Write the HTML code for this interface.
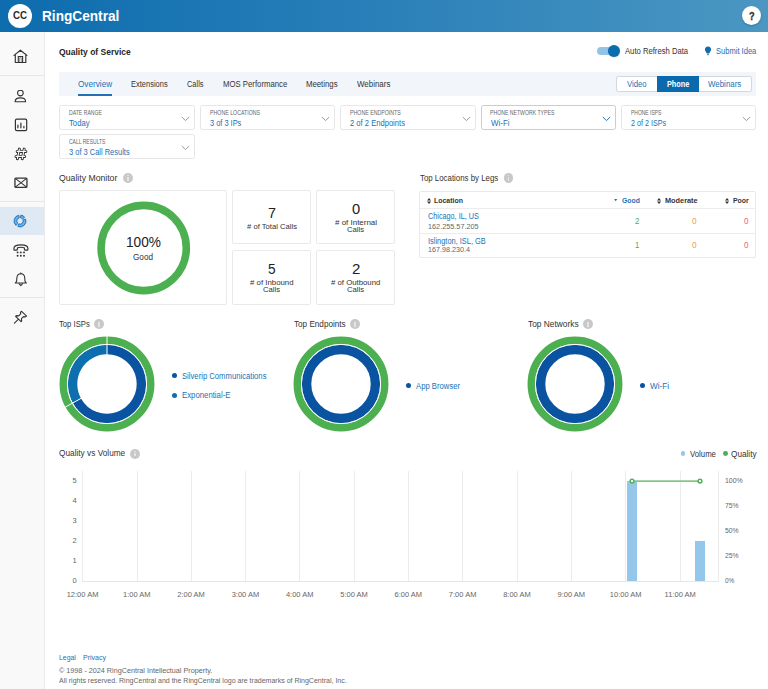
<!DOCTYPE html>
<html><head><meta charset="utf-8"><style>
html,body{margin:0;padding:0;}
body{width:768px;height:689px;position:relative;overflow:hidden;background:#fff;font-family:"Liberation Sans", sans-serif;}
.t{position:absolute;white-space:nowrap;transform-origin:0 0;}
.r{position:absolute;}
</style></head><body>
<div class="r" style="left:0px;top:0px;width:768px;height:32px;background:linear-gradient(90deg,#0d6cad 0%,#2a80b9 50%,#4b97c2 100%);"></div>
<div class="r" style="left:8px;top:4px;width:24px;height:24px;background:#fff;border-radius:50%;"></div>
<div class="t" id="t1" style="left:13.40px;top:11.00px;font-size:10px;line-height:10px;color:#2b2b2b;font-weight:bold;transform:scaleX(0.9714);"><span>CC</span></div>
<div class="t" id="t2" style="left:42.30px;top:9.00px;font-size:14px;line-height:14px;color:#fff;font-weight:bold;transform:scaleX(0.9747);"><span>RingCentral</span></div>
<div class="r" style="left:741.9px;top:5.9px;width:19.5px;height:19.5px;background:#fff;border-radius:50%;box-shadow:0 1px 2px rgba(0,0,0,.22);"></div>
<div class="t" id="t3" style="left:748.90px;top:11.00px;font-size:11.5px;line-height:11.5px;color:#333;font-weight:bold;transform:scaleX(0.8000);-webkit-text-stroke:0.35px #333;"><span>?</span></div>
<div class="r" style="left:0px;top:32px;width:45px;height:657px;background:#f9f9f9;border-right:1px solid #ebebeb;box-sizing:border-box;"></div>
<div class="r" style="left:0px;top:75px;width:44px;height:1px;background:#e6e6e6;"></div>
<div class="r" style="left:0px;top:201px;width:44px;height:1px;background:#e6e6e6;"></div>
<div class="r" style="left:0px;top:297px;width:44px;height:1px;background:#e6e6e6;"></div>
<div class="r" style="left:0px;top:207px;width:44px;height:28px;background:#dfe9f3;"></div>
<svg class="r" style="left:13px;top:49px" width="15" height="15" viewBox="0 0 15 15"><path d="M1 6.4 L7.4 1.2 L13.9 6.4 M2.3 5.4 V13.5 H12.8 V5.4" fill="none" stroke="#333" stroke-width="1.15" stroke-linejoin="round" stroke-linecap="round"/><path d="M5.3 13.5 V7.5 H9.6 V13.5" fill="none" stroke="#333" stroke-width="1.1"/><path d="M6.6 13.5 V8.7 H8.3 V13.5" fill="none" stroke="#333" stroke-width="0.45"/></svg>
<svg class="r" style="left:14px;top:89.5px" width="13" height="13" viewBox="0 0 13 13"><circle cx="6.4" cy="3.0" r="2.85" fill="none" stroke="#333" stroke-width="1.1"/><path d="M1.1 11.8 C1.1 9 2.8 7.9 6.4 7.9 C10 7.9 11.6 9 11.6 11.8 Z" fill="none" stroke="#333" stroke-width="1.1" stroke-linejoin="round"/></svg>
<svg class="r" style="left:13.5px;top:117.5px" width="14" height="14" viewBox="0 0 14 14"><rect x="1.4" y="1.2" width="11.3" height="11.4" rx="1.4" fill="none" stroke="#333" stroke-width="1.2"/><path d="M3.9 7.1 V9.8 M6.9 5.2 V9.8 M9.9 8.4 V9.8" stroke="#333" stroke-width="1.2" stroke-linecap="round"/></svg>
<svg class="r" style="left:13.5px;top:146.5px" width="14" height="14" viewBox="0 0 14 14"><path d="M5.4 2.1 L3.4 11.7 M10.2 2.1 L8.3 11.7 M3.2 4.4 H11.8 M2.0 9.4 H10.6" fill="none" stroke="#333" stroke-width="3.0" stroke-linecap="round"/><path d="M5.4 2.1 L3.4 11.7 M10.2 2.1 L8.3 11.7 M3.2 4.4 H11.8 M2.0 9.4 H10.6" fill="none" stroke="#f8f8f8" stroke-width="1.1" stroke-linecap="round"/></svg>
<svg class="r" style="left:13.5px;top:176.5px" width="14" height="12" viewBox="0 0 14 12"><rect x="0.95" y="1.05" width="12" height="9.3" rx="1.1" fill="none" stroke="#333" stroke-width="1.3"/><path d="M0.95 1.05 L12.95 10.35 M12.95 1.05 L0.95 10.35" fill="none" stroke="#333" stroke-width="1.05"/></svg>
<svg class="r" style="left:13.4px;top:213.9px" width="14" height="14" viewBox="0 0 14 14"><path d="M7.93 1.12 A5.95 5.95 0 0 1 11.69 3.34 L9.52 5.03 A3.2 3.2 0 0 0 7.50 3.84 Z" fill="#74ade0" stroke="#1f78c0" stroke-width="1.0" stroke-linejoin="round"/><path d="M12.66 5.16 A5.95 5.95 0 0 1 4.96 12.59 L5.91 10.01 A3.2 3.2 0 0 0 10.04 6.01 Z" fill="#74ade0" stroke="#1f78c0" stroke-width="1.0" stroke-linejoin="round"/><path d="M3.02 11.42 A5.95 5.95 0 0 1 5.76 1.18 L6.33 3.87 A3.2 3.2 0 0 0 4.86 9.38 Z" fill="#74ade0" stroke="#1f78c0" stroke-width="1.0" stroke-linejoin="round"/></svg>
<svg class="r" style="left:12.5px;top:242.7px" width="16" height="14" viewBox="0 0 16 14"><path d="M4.3 6.6 L4.5 4.8 C6.5 4.1 9.3 4.1 11.3 4.8 L11.5 6.6 Q11.6 7.1 12.1 7.1 L14.3 7.1 Q14.9 7.1 14.9 6.5 L14.9 5.5 C14.9 3 11.5 1.9 7.9 1.9 C4.3 1.9 0.9 3 0.9 5.5 L0.9 6.5 Q0.9 7.1 1.5 7.1 L3.7 7.1 Q4.2 7.1 4.3 6.6 Z" fill="none" stroke="#333" stroke-width="1.15" stroke-linejoin="round"/><circle cx="4.6" cy="9.4" r="0.95" fill="#333"/><circle cx="4.6" cy="12.8" r="0.95" fill="#333"/><circle cx="7.8" cy="9.4" r="0.95" fill="#333"/><circle cx="7.8" cy="12.8" r="0.95" fill="#333"/><circle cx="11.0" cy="9.4" r="0.95" fill="#333"/><circle cx="11.0" cy="12.8" r="0.95" fill="#333"/></svg>
<svg class="r" style="left:13.5px;top:271.5px" width="14" height="15" viewBox="0 0 14 15"><path d="M6.8 1.8 C4.3 1.8 2.9 3.8 2.8 6.5 L2.6 9.3 L1.25 11 L12.35 11 L11 9.3 L10.8 6.5 C10.7 3.8 9.3 1.8 6.8 1.8 Z" fill="none" stroke="#333" stroke-width="1.1" stroke-linejoin="round"/><path d="M4.8 11.4 L6.8 13.7 L8.8 11.4" fill="none" stroke="#333" stroke-width="1.1" stroke-linejoin="round"/><circle cx="6.8" cy="1.4" r="0.8" fill="#333"/></svg>
<svg class="r" style="left:13px;top:310px" width="15" height="15" viewBox="0 0 15 15"><path d="M8.6 1.3 L13.6 6.1 L12.4 6.9 L10.5 6.6 L8.4 8.6 L8.7 10.9 L8.1 11.7 L2.6 6.3 L3.5 5.6 L5.7 5.9 L7.7 3.9 L7.5 2.1 Z M5.3 9.3 L1.4 13.1" fill="none" stroke="#333" stroke-width="1.1" stroke-linejoin="round" stroke-linecap="round"/></svg>
<div class="t" id="t4" style="left:59.00px;top:47.00px;font-size:9.5px;line-height:9.5px;color:#262626;font-weight:bold;transform:scaleX(0.8938);"><span>Quality of Service</span></div>
<div class="r" style="left:597.2px;top:47px;width:21px;height:7.8px;background:#93c3e6;border-radius:3.9px;"></div>
<div class="r" style="left:607.55px;top:45.05px;width:12px;height:12px;background:#0b6dae;border-radius:50%;box-shadow:0 0.5px 1px rgba(0,0,0,.2);"></div>
<div class="t" id="t5" style="left:624.80px;top:47.00px;font-size:8.5px;line-height:8.5px;color:#333;font-weight:normal;transform:scaleX(0.9029);"><span>Auto Refresh Data</span></div>
<svg class="r" style="left:704.2px;top:46.2px" width="8" height="10" viewBox="0 0 8 10"><path d="M4 0.4 C2 0.4 0.9 1.9 0.9 3.5 C0.9 5.1 2.3 5.9 2.7 7.4 H5.3 C5.7 5.9 7.1 5.1 7.1 3.5 C7.1 1.9 6 0.4 4 0.4 Z" fill="#0f6dae"/><path d="M2.8 7.9 H5.2 L4.9 9.3 H3.1 Z" fill="#5b9fd0"/></svg>
<div class="t" id="t6" style="left:716.40px;top:47.00px;font-size:8.5px;line-height:8.5px;color:#1a6fae;font-weight:normal;transform:scaleX(0.8889);"><span>Submit Idea</span></div>
<div class="r" style="left:59px;top:72px;width:697px;height:24px;background:#f2f6fa;"></div>
<div class="t" id="t7" style="left:78.00px;top:80.00px;font-size:8.5px;line-height:8.5px;color:#2072b5;font-weight:normal;transform:scaleX(0.9629);"><span>Overview</span></div>
<div class="t" id="t8" style="left:131.00px;top:80.00px;font-size:8.5px;line-height:8.5px;color:#333;font-weight:normal;transform:scaleX(0.8810);"><span>Extensions</span></div>
<div class="t" id="t9" style="left:187.20px;top:80.00px;font-size:8.5px;line-height:8.5px;color:#333;font-weight:normal;transform:scaleX(0.8737);"><span>Calls</span></div>
<div class="t" id="t10" style="left:223.00px;top:80.00px;font-size:8.5px;line-height:8.5px;color:#333;font-weight:normal;transform:scaleX(0.9129);"><span>MOS Performance</span></div>
<div class="t" id="t11" style="left:306.00px;top:80.00px;font-size:8.5px;line-height:8.5px;color:#333;font-weight:normal;transform:scaleX(0.9143);"><span>Meetings</span></div>
<div class="t" id="t12" style="left:357.00px;top:80.00px;font-size:8.5px;line-height:8.5px;color:#333;font-weight:normal;transform:scaleX(0.9333);"><span>Webinars</span></div>
<div class="r" style="left:78px;top:94.4px;width:34px;height:1.7px;background:#2072b5;"></div>
<div class="r" style="left:616px;top:76px;width:136px;height:16px;background:#fff;border:1px solid #d0d7de;border-radius:2px;box-sizing:border-box;"></div>
<div class="r" style="left:657px;top:76px;width:42px;height:16px;background:#0b6aad;"></div>
<div class="t" id="t13" style="left:627.00px;top:80.00px;font-size:8.5px;line-height:8.5px;color:#2072b5;font-weight:normal;transform:scaleX(0.9091);"><span>Video</span></div>
<div class="t" id="t14" style="left:666.70px;top:80.00px;font-size:8.5px;line-height:8.5px;color:#fff;font-weight:bold;transform:scaleX(0.8577);"><span>Phone</span></div>
<div class="t" id="t15" style="left:708.00px;top:80.00px;font-size:8.5px;line-height:8.5px;color:#2072b5;font-weight:normal;transform:scaleX(0.9306);"><span>Webinars</span></div>
<div class="r" style="left:59.3px;top:105.4px;width:135.5px;height:24.4px;background:#fff;border:1px solid #e6e6e6;border-radius:2.5px;box-sizing:border-box;"></div>
<div class="t" id="t16" style="left:69.10px;top:110.00px;font-size:6.5px;line-height:6.5px;color:#666;font-weight:normal;transform:scaleX(0.7881);"><span>DATE RANGE</span></div>
<div class="t" id="t17" style="left:69.30px;top:119.00px;font-size:9px;line-height:9px;color:#2072b5;font-weight:normal;transform:scaleX(0.8583);"><span>Today</span></div>
<svg class="r" style="left:180.8px;top:115.5px" width="9" height="6" viewBox="0 0 9 6"><path d="M0.8 1 L4.5 4.6 L8.2 1" fill="none" stroke="#999" stroke-width="1"/></svg>
<div class="r" style="left:199.7px;top:105.4px;width:135.5px;height:24.4px;background:#fff;border:1px solid #e6e6e6;border-radius:2.5px;box-sizing:border-box;"></div>
<div class="t" id="t18" style="left:209.50px;top:110.00px;font-size:6.5px;line-height:6.5px;color:#666;font-weight:normal;transform:scaleX(0.8081);"><span>PHONE LOCATIONS</span></div>
<div class="t" id="t19" style="left:209.70px;top:119.00px;font-size:9px;line-height:9px;color:#2072b5;font-weight:normal;transform:scaleX(0.8237);"><span>3 of 3 IPs</span></div>
<svg class="r" style="left:321.2px;top:115.5px" width="9" height="6" viewBox="0 0 9 6"><path d="M0.8 1 L4.5 4.6 L8.2 1" fill="none" stroke="#999" stroke-width="1"/></svg>
<div class="r" style="left:340.1px;top:105.4px;width:135.5px;height:24.4px;background:#fff;border:1px solid #e6e6e6;border-radius:2.5px;box-sizing:border-box;"></div>
<div class="t" id="t20" style="left:349.90px;top:110.00px;font-size:6.5px;line-height:6.5px;color:#666;font-weight:normal;transform:scaleX(0.8079);"><span>PHONE ENDPOINTS</span></div>
<div class="t" id="t21" style="left:350.10px;top:119.00px;font-size:9px;line-height:9px;color:#2072b5;font-weight:normal;transform:scaleX(0.8446);"><span>2 of 2 Endpoints</span></div>
<svg class="r" style="left:461.6px;top:115.5px" width="9" height="6" viewBox="0 0 9 6"><path d="M0.8 1 L4.5 4.6 L8.2 1" fill="none" stroke="#999" stroke-width="1"/></svg>
<div class="r" style="left:480.5px;top:105.4px;width:135.5px;height:24.4px;background:#fff;border:1px solid #b3d3ec;border-radius:2.5px;box-sizing:border-box;"></div>
<div class="t" id="t22" style="left:490.30px;top:110.00px;font-size:6.5px;line-height:6.5px;color:#666;font-weight:normal;transform:scaleX(0.7926);"><span>PHONE NETWORK TYPES</span></div>
<div class="t" id="t23" style="left:490.50px;top:119.00px;font-size:9px;line-height:9px;color:#2072b5;font-weight:normal;transform:scaleX(0.8810);"><span>Wi-Fi</span></div>
<svg class="r" style="left:602.0px;top:115.5px" width="9" height="6" viewBox="0 0 9 6"><path d="M0.8 1 L4.5 4.6 L8.2 1" fill="none" stroke="#2072b5" stroke-width="1"/></svg>
<div class="r" style="left:620.9px;top:105.4px;width:135.5px;height:24.4px;background:#fff;border:1px solid #e6e6e6;border-radius:2.5px;box-sizing:border-box;"></div>
<div class="t" id="t24" style="left:630.70px;top:110.00px;font-size:6.5px;line-height:6.5px;color:#666;font-weight:normal;transform:scaleX(0.7650);"><span>PHONE ISPS</span></div>
<div class="t" id="t25" style="left:630.90px;top:119.00px;font-size:9px;line-height:9px;color:#2072b5;font-weight:normal;transform:scaleX(0.7955);"><span>2 of 2 ISPs</span></div>
<svg class="r" style="left:742.4px;top:115.5px" width="9" height="6" viewBox="0 0 9 6"><path d="M0.8 1 L4.5 4.6 L8.2 1" fill="none" stroke="#999" stroke-width="1"/></svg>
<div class="r" style="left:59.3px;top:134.2px;width:135.5px;height:24.4px;background:#fff;border:1px solid #e6e6e6;border-radius:2.5px;box-sizing:border-box;"></div>
<div class="t" id="t26" style="left:69.10px;top:139.00px;font-size:6.5px;line-height:6.5px;color:#666;font-weight:normal;transform:scaleX(0.7702);"><span>CALL RESULTS</span></div>
<div class="t" id="t27" style="left:69.30px;top:148.00px;font-size:9px;line-height:9px;color:#2072b5;font-weight:normal;transform:scaleX(0.8301);"><span>3 of 3 Call Results</span></div>
<svg class="r" style="left:180.8px;top:144.5px" width="9" height="6" viewBox="0 0 9 6"><path d="M0.8 1 L4.5 4.6 L8.2 1" fill="none" stroke="#999" stroke-width="1"/></svg>
<div class="t" id="t28" style="left:59.00px;top:174.00px;font-size:9px;line-height:9px;color:#333;font-weight:normal;transform:scaleX(0.9639);"><span>Quality Monitor</span></div>
<div class="r" style="left:123.0px;top:173.0px;width:9.8px;height:9.8px;background:#c8c8c8;border-radius:50%;"></div>
<div class="r" style="left:127.05000000000001px;top:177.0px;width:1.7px;height:3.5px;background:#e4e4e4;"></div>
<div class="r" style="left:127.05000000000001px;top:175.1px;width:1.7px;height:1.2px;background:#e4e4e4;"></div>
<div class="t" id="t29" style="left:420.00px;top:174.00px;font-size:9px;line-height:9px;color:#333;font-weight:normal;transform:scaleX(0.8733);"><span>Top Locations by Legs</span></div>
<div class="r" style="left:503.5px;top:173.0px;width:9.8px;height:9.8px;background:#c8c8c8;border-radius:50%;"></div>
<div class="r" style="left:507.54999999999995px;top:177.0px;width:1.7px;height:3.5px;background:#e4e4e4;"></div>
<div class="r" style="left:507.54999999999995px;top:175.1px;width:1.7px;height:1.2px;background:#e4e4e4;"></div>
<div class="t" id="t30" style="left:58.70px;top:320.00px;font-size:9px;line-height:9px;color:#333;font-weight:normal;transform:scaleX(0.8528);"><span>Top ISPs</span></div>
<div class="r" style="left:94.19999999999999px;top:319.40000000000003px;width:9.8px;height:9.8px;background:#c8c8c8;border-radius:50%;"></div>
<div class="r" style="left:98.25px;top:323.40000000000003px;width:1.7px;height:3.5px;background:#e4e4e4;"></div>
<div class="r" style="left:98.25px;top:321.5px;width:1.7px;height:1.2px;background:#e4e4e4;"></div>
<div class="t" id="t31" style="left:293.60px;top:320.00px;font-size:9px;line-height:9px;color:#333;font-weight:normal;transform:scaleX(0.9053);"><span>Top Endpoints</span></div>
<div class="r" style="left:350.3px;top:319.40000000000003px;width:9.8px;height:9.8px;background:#c8c8c8;border-radius:50%;"></div>
<div class="r" style="left:354.34999999999997px;top:323.40000000000003px;width:1.7px;height:3.5px;background:#e4e4e4;"></div>
<div class="r" style="left:354.34999999999997px;top:321.5px;width:1.7px;height:1.2px;background:#e4e4e4;"></div>
<div class="t" id="t32" style="left:527.70px;top:320.00px;font-size:9px;line-height:9px;color:#333;font-weight:normal;transform:scaleX(0.9273);"><span>Top Networks</span></div>
<div class="r" style="left:583.4px;top:319.40000000000003px;width:9.8px;height:9.8px;background:#c8c8c8;border-radius:50%;"></div>
<div class="r" style="left:587.4499999999999px;top:323.40000000000003px;width:1.7px;height:3.5px;background:#e4e4e4;"></div>
<div class="r" style="left:587.4499999999999px;top:321.5px;width:1.7px;height:1.2px;background:#e4e4e4;"></div>
<div class="t" id="t33" style="left:59.00px;top:449.00px;font-size:9px;line-height:9px;color:#333;font-weight:normal;transform:scaleX(0.9194);"><span>Quality vs Volume</span></div>
<div class="r" style="left:130.29999999999998px;top:448.8px;width:9.8px;height:9.8px;background:#c8c8c8;border-radius:50%;"></div>
<div class="r" style="left:134.35px;top:452.8px;width:1.7px;height:3.5px;background:#e4e4e4;"></div>
<div class="r" style="left:134.35px;top:450.9px;width:1.7px;height:1.2px;background:#e4e4e4;"></div>
<div class="r" style="left:59px;top:190px;width:168px;height:114.5px;background:#fff;border:1px solid #e9e9e9;border-radius:2px;box-sizing:border-box;"></div>
<svg class="r" style="left:96px;top:201px" width="96" height="96" viewBox="0 0 96 96"><circle cx="47.7" cy="47" r="42.6" fill="none" stroke="#4caf50" stroke-width="7.6"/></svg>
<div class="t" id="t34" style="left:126.00px;top:235.00px;font-size:14px;line-height:14px;color:#222;font-weight:normal;transform:scaleX(0.9778);"><span>100%</span></div>
<div class="t" id="t35" style="left:133.40px;top:253.00px;font-size:9px;line-height:9px;color:#333;font-weight:normal;transform:scaleX(0.9091);"><span>Good</span></div>
<div class="r" style="left:232px;top:190px;width:79px;height:54.4px;background:#fff;border:1px solid #e9e9e9;border-radius:2px;box-sizing:border-box;"></div>
<div class="t" id="t36" style="left:267.70px;top:206.00px;font-size:14px;line-height:14px;color:#222;font-weight:normal;transform:scaleX(1.0250);"><span>7</span></div>
<div class="t" id="t37" style="left:246.65px;top:223.00px;font-size:8px;line-height:8px;color:#333;font-weight:normal;transform:scaleX(0.9558);"><span># of Total Calls</span></div>
<div class="r" style="left:316.4px;top:190px;width:79px;height:54.4px;background:#fff;border:1px solid #e9e9e9;border-radius:2px;box-sizing:border-box;"></div>
<div class="t" id="t38" style="left:352.00px;top:202.00px;font-size:14px;line-height:14px;color:#222;font-weight:normal;transform:scaleX(1.0500);"><span>0</span></div>
<div class="t" id="t39" style="left:335.00px;top:219.00px;font-size:8px;line-height:8px;color:#333;font-weight:normal;transform:scaleX(0.9952);"><span># of Internal</span></div>
<div class="t" id="t40" style="left:347.25px;top:226.00px;font-size:8px;line-height:8px;color:#333;font-weight:normal;transform:scaleX(0.9611);"><span>Calls</span></div>
<div class="r" style="left:232px;top:250.3px;width:79px;height:54.4px;background:#fff;border:1px solid #e9e9e9;border-radius:2px;box-sizing:border-box;"></div>
<div class="t" id="t41" style="left:267.90px;top:262.00px;font-size:14px;line-height:14px;color:#222;font-weight:normal;transform:scaleX(0.9750);"><span>5</span></div>
<div class="t" id="t42" style="left:249.95px;top:279.00px;font-size:8px;line-height:8px;color:#333;font-weight:normal;transform:scaleX(0.9795);"><span># of Inbound</span></div>
<div class="t" id="t43" style="left:262.85px;top:286.00px;font-size:8px;line-height:8px;color:#333;font-weight:normal;transform:scaleX(0.9611);"><span>Calls</span></div>
<div class="r" style="left:316.4px;top:250.3px;width:79px;height:54.4px;background:#fff;border:1px solid #e9e9e9;border-radius:2px;box-sizing:border-box;"></div>
<div class="t" id="t44" style="left:351.90px;top:262.00px;font-size:14px;line-height:14px;color:#222;font-weight:normal;transform:scaleX(1.0750);"><span>2</span></div>
<div class="t" id="t45" style="left:331.10px;top:279.00px;font-size:8px;line-height:8px;color:#333;font-weight:normal;transform:scaleX(0.9725);"><span># of Outbound</span></div>
<div class="t" id="t46" style="left:347.25px;top:286.00px;font-size:8px;line-height:8px;color:#333;font-weight:normal;transform:scaleX(0.9611);"><span>Calls</span></div>
<div class="r" style="left:419.4px;top:190.6px;width:337px;height:67px;background:#fff;border:1px solid #e9e9e9;border-radius:2px;box-sizing:border-box;"></div>
<div class="r" style="left:420px;top:208px;width:336px;height:1px;background:#ececec;"></div>
<div class="r" style="left:420px;top:233px;width:336px;height:1px;background:#ececec;"></div>
<svg class="r" style="left:427.1px;top:197.6px" width="5" height="7" viewBox="0 0 5 7"><path d="M0 2.5 L2.05 0.1 L4.1 2.5 Z M0 3.6 L2.05 6.0 L4.1 3.6 Z" fill="#333"/></svg>
<div class="t" id="t47" style="left:433.90px;top:197.00px;font-size:7px;line-height:7px;color:#333;font-weight:bold;transform:scaleX(0.9897);"><span>Location</span></div>
<svg class="r" style="left:614.4px;top:198.7px" width="4" height="3" viewBox="0 0 4 3"><path d="M0.1 0.1 L3.3 0.1 L1.7 2.2 Z" fill="#2072b5"/></svg>
<div class="t" id="t48" style="left:621.70px;top:197.00px;font-size:7px;line-height:7px;color:#2072b5;font-weight:bold;transform:scaleX(0.9778);"><span>Good</span></div>
<svg class="r" style="left:657.3px;top:197.6px" width="5" height="7" viewBox="0 0 5 7"><path d="M0 2.5 L2.05 0.1 L4.1 2.5 Z M0 3.6 L2.05 6.0 L4.1 3.6 Z" fill="#333"/></svg>
<div class="t" id="t49" style="left:664.80px;top:197.00px;font-size:7px;line-height:7px;color:#333;font-weight:bold;transform:scaleX(1.0484);"><span>Moderate</span></div>
<svg class="r" style="left:725.4px;top:197.6px" width="5" height="7" viewBox="0 0 5 7"><path d="M0 2.5 L2.05 0.1 L4.1 2.5 Z M0 3.6 L2.05 6.0 L4.1 3.6 Z" fill="#333"/></svg>
<div class="t" id="t50" style="left:732.50px;top:197.00px;font-size:7px;line-height:7px;color:#333;font-weight:bold;transform:scaleX(0.9875);"><span>Poor</span></div>
<div class="t" id="t51" style="left:427.60px;top:212.00px;font-size:9px;line-height:9px;color:#2072b5;font-weight:normal;transform:scaleX(0.8063);"><span>Chicago, IL, US</span></div>
<div class="t" id="t52" style="left:427.60px;top:223.00px;font-size:7.5px;line-height:7.5px;color:#666;font-weight:normal;transform:scaleX(0.9712);"><span>162.255.57.205</span></div>
<div class="t" id="t53" style="left:427.60px;top:237.00px;font-size:9px;line-height:9px;color:#2072b5;font-weight:normal;transform:scaleX(0.8257);"><span>Islington, ISL, GB</span></div>
<div class="t" id="t54" style="left:427.60px;top:246.00px;font-size:7.5px;line-height:7.5px;color:#666;font-weight:normal;transform:scaleX(0.9591);"><span>167.98.230.4</span></div>
<div class="t" id="t55" style="left:635.10px;top:217.00px;font-size:9px;line-height:9px;color:#4caf50;font-weight:normal;transform:scaleX(0.8600);"><span>2</span></div>
<div class="t" id="t56" style="left:692.40px;top:217.00px;font-size:9px;line-height:9px;color:#ee9a4d;font-weight:normal;transform:scaleX(0.9200);"><span>0</span></div>
<div class="t" id="t57" style="left:743.70px;top:217.00px;font-size:9px;line-height:9px;color:#f0646a;font-weight:normal;transform:scaleX(0.9200);"><span>0</span></div>
<div class="t" id="t58" style="left:635.10px;top:241.00px;font-size:9px;line-height:9px;color:#4caf50;font-weight:normal;transform:scaleX(0.8600);"><span>1</span></div>
<div class="t" id="t59" style="left:692.40px;top:241.00px;font-size:9px;line-height:9px;color:#ee9a4d;font-weight:normal;transform:scaleX(0.9200);"><span>0</span></div>
<div class="t" id="t60" style="left:743.70px;top:241.00px;font-size:9px;line-height:9px;color:#f0646a;font-weight:normal;transform:scaleX(0.9200);"><span>0</span></div>
<svg class="r" style="left:57.06999999999999px;top:334.2px" width="100" height="100" viewBox="0 0 100 100"><circle cx="50" cy="50" r="43.725" fill="none" stroke="#4caf50" stroke-width="7.450000000000003"/><path d="M50.000 15.550 A34.45 34.45 0 1 1 19.869 66.702" fill="none" stroke="#0a53a1" stroke-width="9.500000000000004"/><path d="M19.869 66.702 A34.45 34.45 0 0 1 49.999 15.550" fill="none" stroke="#0d6fad" stroke-width="9.500000000000004"/><circle cx="50" cy="50" r="39.6" fill="none" stroke="#fff" stroke-width="0.9"/><line x1="50.000" y1="22.000" x2="50.000" y2="2.000" stroke="#fff" stroke-width="1"/><line x1="25.511" y1="63.575" x2="8.018" y2="73.271" stroke="#fff" stroke-width="1"/></svg>
<svg class="r" style="left:291.3px;top:334.3px" width="100" height="100" viewBox="0 0 100 100"><circle cx="50" cy="50" r="43.725" fill="none" stroke="#4caf50" stroke-width="7.450000000000003"/><circle cx="50" cy="50" r="34.45" fill="none" stroke="#0a53a1" stroke-width="9.500000000000004"/><circle cx="50" cy="50" r="39.6" fill="none" stroke="#fff" stroke-width="0.9"/></svg>
<svg class="r" style="left:525.2px;top:334.3px" width="100" height="100" viewBox="0 0 100 100"><circle cx="50" cy="50" r="43.725" fill="none" stroke="#4caf50" stroke-width="7.450000000000003"/><circle cx="50" cy="50" r="34.45" fill="none" stroke="#0a53a1" stroke-width="9.500000000000004"/><circle cx="50" cy="50" r="39.6" fill="none" stroke="#fff" stroke-width="0.9"/></svg>
<div class="r" style="left:171.75px;top:373.29999999999995px;width:5.2px;height:5.2px;background:#0a53a1;border-radius:50%;"></div>
<div class="t" id="t61" style="left:181.60px;top:372.00px;font-size:8.5px;line-height:8.5px;color:#2072b5;font-weight:normal;transform:scaleX(0.9032);"><span>Silverip Communications</span></div>
<div class="r" style="left:171.75px;top:392.59999999999997px;width:5.2px;height:5.2px;background:#0d6fad;border-radius:50%;"></div>
<div class="t" id="t62" style="left:181.60px;top:391.00px;font-size:8.5px;line-height:8.5px;color:#2072b5;font-weight:normal;transform:scaleX(0.9151);"><span>Exponential-E</span></div>
<div class="r" style="left:406.04999999999995px;top:383.15px;width:5.2px;height:5.2px;background:#0a53a1;border-radius:50%;"></div>
<div class="t" id="t63" style="left:416.00px;top:382.00px;font-size:8.5px;line-height:8.5px;color:#2072b5;font-weight:normal;transform:scaleX(0.9061);"><span>App Browser</span></div>
<div class="r" style="left:639.9px;top:383.09999999999997px;width:5.2px;height:5.2px;background:#0a53a1;border-radius:50%;"></div>
<div class="t" id="t64" style="left:649.80px;top:382.00px;font-size:8.5px;line-height:8.5px;color:#2072b5;font-weight:normal;transform:scaleX(0.9600);"><span>Wi-Fi</span></div>
<div class="r" style="left:680.7px;top:451.40000000000003px;width:4.8px;height:4.8px;background:#95c7ea;border-radius:50%;"></div>
<div class="t" id="t65" style="left:689.70px;top:450.00px;font-size:8.5px;line-height:8.5px;color:#333;font-weight:normal;transform:scaleX(0.9143);"><span>Volume</span></div>
<div class="r" style="left:723.0px;top:451.40000000000003px;width:4.8px;height:4.8px;background:#4caf50;border-radius:50%;"></div>
<div class="t" id="t66" style="left:731.30px;top:450.00px;font-size:8.5px;line-height:8.5px;color:#333;font-weight:normal;transform:scaleX(0.9654);"><span>Quality</span></div>
<div class="r" style="left:82.2px;top:471px;width:1px;height:110.5px;background:#ececec;"></div>
<div class="r" style="left:136.5px;top:471px;width:1px;height:110.5px;background:#ececec;"></div>
<div class="r" style="left:190.8px;top:471px;width:1px;height:110.5px;background:#ececec;"></div>
<div class="r" style="left:245.1px;top:471px;width:1px;height:110.5px;background:#ececec;"></div>
<div class="r" style="left:299.4px;top:471px;width:1px;height:110.5px;background:#ececec;"></div>
<div class="r" style="left:353.8px;top:471px;width:1px;height:110.5px;background:#ececec;"></div>
<div class="r" style="left:408.1px;top:471px;width:1px;height:110.5px;background:#ececec;"></div>
<div class="r" style="left:462.4px;top:471px;width:1px;height:110.5px;background:#ececec;"></div>
<div class="r" style="left:516.7px;top:471px;width:1px;height:110.5px;background:#ececec;"></div>
<div class="r" style="left:571.0px;top:471px;width:1px;height:110.5px;background:#ececec;"></div>
<div class="r" style="left:625.3px;top:471px;width:1px;height:110.5px;background:#ececec;"></div>
<div class="r" style="left:679.6px;top:471px;width:1px;height:110.5px;background:#ececec;"></div>
<div class="r" style="left:718.3px;top:471px;width:1px;height:110.5px;background:#ececec;"></div>
<div class="r" style="left:82.2px;top:581px;width:637px;height:1px;background:#e6e6e6;"></div>
<div class="t" id="t67" style="left:72.40px;top:577.00px;font-size:7.5px;line-height:7.5px;color:#666;font-weight:normal;"><span>0</span></div>
<div class="t" id="t68" style="left:72.40px;top:557.00px;font-size:7.5px;line-height:7.5px;color:#666;font-weight:normal;"><span>1</span></div>
<div class="t" id="t69" style="left:72.40px;top:537.00px;font-size:7.5px;line-height:7.5px;color:#666;font-weight:normal;"><span>2</span></div>
<div class="t" id="t70" style="left:72.40px;top:517.00px;font-size:7.5px;line-height:7.5px;color:#666;font-weight:normal;"><span>3</span></div>
<div class="t" id="t71" style="left:72.40px;top:497.00px;font-size:7.5px;line-height:7.5px;color:#666;font-weight:normal;"><span>4</span></div>
<div class="t" id="t72" style="left:72.40px;top:477.00px;font-size:7.5px;line-height:7.5px;color:#666;font-weight:normal;"><span>5</span></div>
<div class="t" id="t73" style="left:724.60px;top:577.00px;font-size:7.5px;line-height:7.5px;color:#666;font-weight:normal;transform:scaleX(0.8636);"><span>0%</span></div>
<div class="t" id="t74" style="left:724.60px;top:552.00px;font-size:7.5px;line-height:7.5px;color:#666;font-weight:normal;transform:scaleX(0.9067);"><span>25%</span></div>
<div class="t" id="t75" style="left:724.60px;top:527.00px;font-size:7.5px;line-height:7.5px;color:#666;font-weight:normal;transform:scaleX(0.9067);"><span>50%</span></div>
<div class="t" id="t76" style="left:724.60px;top:502.00px;font-size:7.5px;line-height:7.5px;color:#666;font-weight:normal;transform:scaleX(0.9067);"><span>75%</span></div>
<div class="t" id="t77" style="left:724.60px;top:477.00px;font-size:7.5px;line-height:7.5px;color:#666;font-weight:normal;transform:scaleX(0.9263);"><span>100%</span></div>
<div class="t" id="t78" style="left:66.70px;top:591.00px;font-size:7.5px;line-height:7.5px;color:#666;font-weight:normal;"><span>12:00 AM</span></div>
<div class="t" id="t79" style="left:123.01px;top:591.00px;font-size:7.5px;line-height:7.5px;color:#666;font-weight:normal;"><span>1:00 AM</span></div>
<div class="t" id="t80" style="left:177.32px;top:591.00px;font-size:7.5px;line-height:7.5px;color:#666;font-weight:normal;"><span>2:00 AM</span></div>
<div class="t" id="t81" style="left:231.63px;top:591.00px;font-size:7.5px;line-height:7.5px;color:#666;font-weight:normal;"><span>3:00 AM</span></div>
<div class="t" id="t82" style="left:285.94px;top:591.00px;font-size:7.5px;line-height:7.5px;color:#666;font-weight:normal;"><span>4:00 AM</span></div>
<div class="t" id="t83" style="left:340.25px;top:591.00px;font-size:7.5px;line-height:7.5px;color:#666;font-weight:normal;"><span>5:00 AM</span></div>
<div class="t" id="t84" style="left:394.56px;top:591.00px;font-size:7.5px;line-height:7.5px;color:#666;font-weight:normal;"><span>6:00 AM</span></div>
<div class="t" id="t85" style="left:448.87px;top:591.00px;font-size:7.5px;line-height:7.5px;color:#666;font-weight:normal;"><span>7:00 AM</span></div>
<div class="t" id="t86" style="left:503.18px;top:591.00px;font-size:7.5px;line-height:7.5px;color:#666;font-weight:normal;"><span>8:00 AM</span></div>
<div class="t" id="t87" style="left:557.49px;top:591.00px;font-size:7.5px;line-height:7.5px;color:#666;font-weight:normal;"><span>9:00 AM</span></div>
<div class="t" id="t88" style="left:609.80px;top:591.00px;font-size:7.5px;line-height:7.5px;color:#666;font-weight:normal;"><span>10:00 AM</span></div>
<div class="t" id="t89" style="left:664.61px;top:591.00px;font-size:7.5px;line-height:7.5px;color:#666;font-weight:normal;"><span>11:00 AM</span></div>
<div class="r" style="left:627.3px;top:480.5px;width:9.9px;height:100.8px;background:#95c7ea;"></div>
<div class="r" style="left:695.2px;top:541.2px;width:9.8px;height:40.1px;background:#95c7ea;"></div>
<svg class="r" style="left:620px;top:470px" width="100" height="20" viewBox="0 0 100 20"><line x1="12" y1="11.1" x2="80" y2="11.1" stroke="#84c886" stroke-width="1.9"/><circle cx="12" cy="11.1" r="1.9" fill="#fff" stroke="#55b158" stroke-width="1.5"/><circle cx="80" cy="11.1" r="1.9" fill="#fff" stroke="#55b158" stroke-width="1.5"/></svg>
<div class="t" id="t90" style="left:58.75px;top:654.00px;font-size:7.5px;line-height:7.5px;color:#2072b5;font-weight:normal;transform:scaleX(0.9167);"><span>Legal</span></div>
<div class="t" id="t91" style="left:82.70px;top:654.00px;font-size:7.5px;line-height:7.5px;color:#2072b5;font-weight:normal;transform:scaleX(0.9320);"><span>Privacy</span></div>
<div class="t" id="t92" style="left:59.00px;top:667.00px;font-size:7.5px;line-height:7.5px;color:#666;font-weight:normal;transform:scaleX(0.9623);"><span>&copy; 1998 - 2024 RingCentral Intellectual Property.</span></div>
<div class="t" id="t93" style="left:59.00px;top:677.00px;font-size:7.5px;line-height:7.5px;color:#666;font-weight:normal;transform:scaleX(0.9351);"><span>All rights reserved. RingCentral and the RingCentral logo are trademarks of RingCentral, Inc.</span></div>
</body></html>
